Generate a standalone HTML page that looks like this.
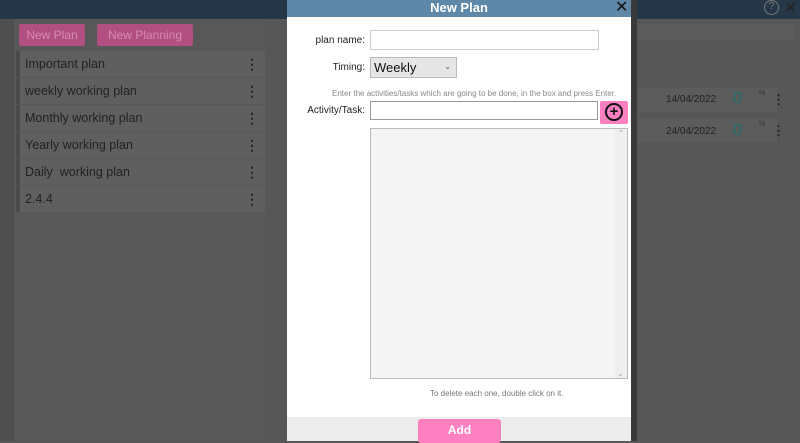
<!DOCTYPE html>
<html><head><meta charset="utf-8"><style>
*{box-sizing:border-box;margin:0;padding:0}
body{width:800px;height:441px;overflow:hidden;background:#575757;font-family:"Liberation Sans",sans-serif;position:relative}
.abs{position:absolute}
.top{left:0;top:0;width:800px;height:19px;background:#263848}
.btn{background:#b04f80;color:#d88ab0;font-size:12px;text-align:center;line-height:22px;border-radius:2px}
.item{left:16px;width:249px;height:26px;background:#5f5f5f;color:#222;font-size:12.5px;line-height:26px;padding-left:5px;border-left:4px solid #4a4a4a}
.dots{position:absolute;right:6px;top:0;color:#222;font-weight:bold;font-size:14px}
.modal{left:287px;top:0;width:344px;height:441px;background:#fff}
.lbl{font-size:10px;color:#222;text-align:right;width:80px}
</style></head><body>
<div class="abs top"></div>
<div class="abs" style="left:0;top:19px;width:14px;height:422px;background:#4f4f4f"></div>
<div class="abs" style="left:14px;top:19px;width:250px;height:422px;background:#585858"></div>
<div class="abs btn" style="left:19px;top:24px;width:66px">New Plan</div>
<div class="abs btn" style="left:97px;top:24px;width:96px">New Planning</div>
<div class="abs item" style="top:51px">Important plan<span class="dots">⋮</span></div>
<div class="abs item" style="top:78px">weekly working plan<span class="dots">⋮</span></div>
<div class="abs item" style="top:105px">Monthly working plan<span class="dots">⋮</span></div>
<div class="abs item" style="top:132px">Yearly working plan<span class="dots">⋮</span></div>
<div class="abs item" style="top:159px">Daily &nbsp;working plan<span class="dots">⋮</span></div>
<div class="abs item" style="top:186px">2.4.4<span class="dots">⋮</span></div>
<div class="abs" style="left:637px;top:24px;width:157px;height:16px;background:#5c5c5c"></div>
<div class="abs" style="left:637px;top:88px;width:140px;height:24px;background:#5c5c5c"></div>
<div class="abs" style="left:637px;top:119px;width:140px;height:24px;background:#5c5c5c"></div>
<div class="abs" style="left:666px;top:94px;font-size:10px;color:#222">14/04/2022</div>
<div class="abs" style="left:733px;top:90px;font-size:16px;line-height:18px;color:#1d6e6e">0</div>
<div class="abs" style="left:759px;top:90px;font-size:7px;color:#333">%</div>
<div class="abs" style="left:772px;top:92px;font-size:13px;color:#222;font-weight:bold">⋮</div>
<div class="abs" style="left:666px;top:126px;font-size:10px;color:#222">24/04/2022</div>
<div class="abs" style="left:733px;top:122px;font-size:16px;line-height:18px;color:#1d6e6e">0</div>
<div class="abs" style="left:759px;top:121px;font-size:7px;color:#333">%</div>
<div class="abs" style="left:772px;top:123px;font-size:13px;color:#222;font-weight:bold">⋮</div>
<div class="abs" style="left:764px;top:0;width:15px;height:15px;border:1.5px solid #777;border-radius:50%;color:#777;font-size:10px;text-align:center;line-height:12px">?</div>
<div class="abs" style="left:784px;top:-2px;font-size:16px;color:#222">✕</div>
<div class="abs" style="left:631px;top:0;width:6px;height:441px;background:#3a3a3a"></div>

<div class="abs modal">
 <div class="abs" style="left:0;top:0;width:344px;height:17px;background:#5e87a8;color:#fff;font-weight:bold;font-size:13px;text-align:center;line-height:15px">New Plan</div>
 <div class="abs" style="left:328px;top:-3px;font-size:16px;color:#111">✕</div>
 <div class="abs lbl" style="left:-2px;top:35px">plan name:</div>
 <div class="abs" style="left:83px;top:30px;width:229px;height:20px;border:1px solid #ccc"></div>
 <div class="abs lbl" style="left:-2px;top:62px">Timing:</div>
 <div class="abs" style="left:83px;top:57px;width:87px;height:21px;border:1px solid #bbb;background:#e6e6e6;font-size:13px;line-height:20px;padding-left:3px;color:#111">Weekly<span style="position:absolute;right:5px;top:-1px;font-size:8px;color:#555">⌄</span></div>
 <div class="abs" style="left:45px;top:89px;font-size:8px;color:#888">Enter the activities/tasks which are going to be done, in the box and press Enter.</div>
 <div class="abs lbl" style="left:-2px;top:105px">Activity/Task:</div>
 <div class="abs" style="left:83px;top:101px;width:228px;height:19px;border:1px solid #999"></div>
 <div class="abs" style="left:313px;top:101px;width:28px;height:23px;background:#ff80c0;border-radius:2px"></div>
 <div class="abs" style="left:318px;top:103px;width:18px;height:18px;border:2px solid #111;border-radius:50%;text-align:center;font-size:15px;line-height:13px;color:#111;font-weight:bold">+</div>
 <div class="abs" style="left:83px;top:128px;width:258px;height:251px;border:1px solid #bbb;background:#f4f4f4"></div>
 <div class="abs" style="left:328px;top:129px;width:12px;height:249px;background:#efefef;font-size:8px;color:#aaa;text-align:center">⌃<span style="position:absolute;bottom:0;left:2px">⌄</span></div>
 <div class="abs" style="left:143px;top:389px;font-size:8px;color:#777">To delete each one, double click on it.</div>
 <div class="abs" style="left:0;top:417px;width:344px;height:24px;background:#ececec"></div>
 <div class="abs" style="left:131px;top:419px;width:83px;height:24px;background:#ff80c0;border-radius:3px;color:#fff;font-weight:bold;font-size:12px;text-align:center;line-height:22px">Add</div>
</div>
</body></html>
